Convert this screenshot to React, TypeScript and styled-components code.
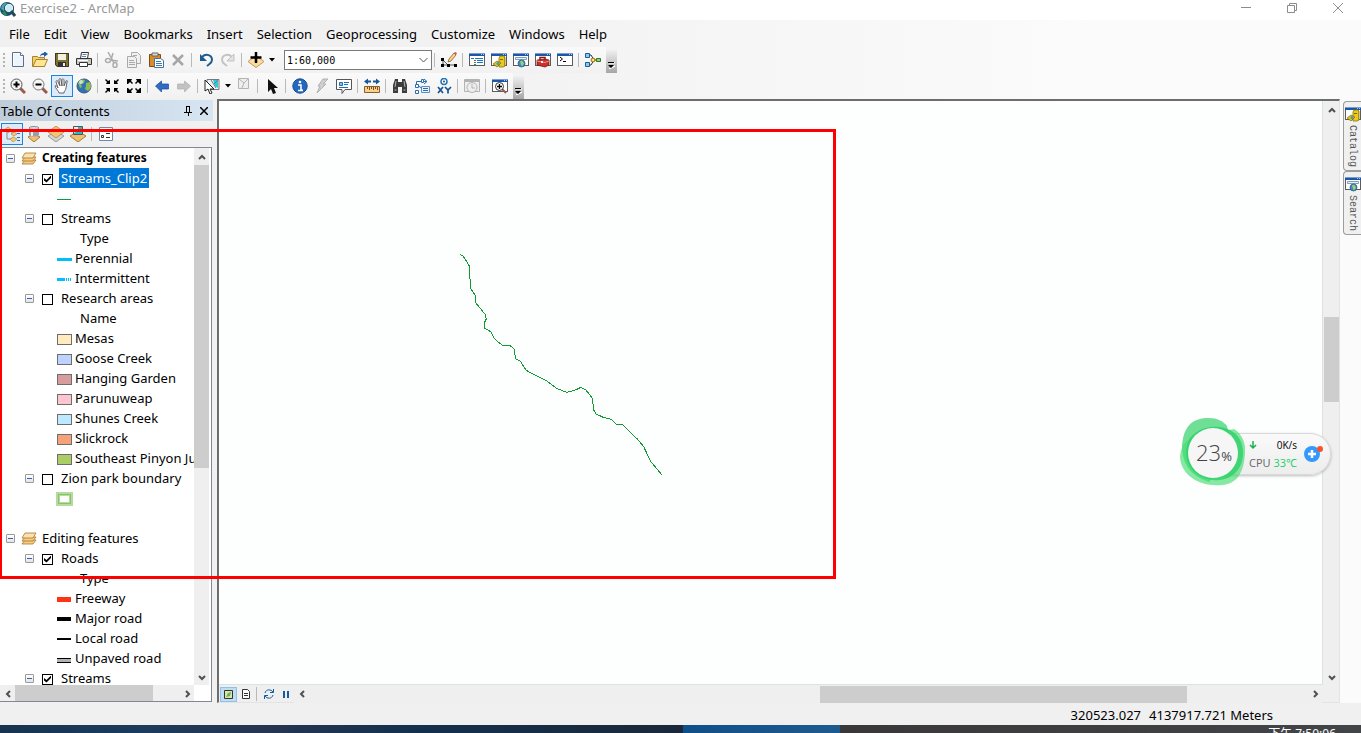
import React from "react";
import styled, { createGlobalStyle, css } from "styled-components";

const Global = createGlobalStyle`
  * { box-sizing: border-box; }
  body {
    margin: 0;
    overflow: hidden;
    background: #f0f0f0;
    color: #000;
    font-family: "Noto Sans", "Noto Sans CJK SC", sans-serif;
    font-size: 13px;
    line-height: 20px;
  }
  button { margin: 0; padding: 0; border: 0; background: none; font: inherit; color: inherit; }
  ul { margin: 0; padding: 0; list-style: none; }
`;

const Window = styled.div`
  position: relative;
  display: flex;
  flex-direction: column;
  height: 100vh;
  overflow: hidden;
  background: linear-gradient(90deg, #f0f0f0, #f1f1f1 30%, #fbfbfb 80%);
`;

/* Title bar */
const TitleBar = styled.header`
  flex: none;
  display: flex;
  align-items: center;
  height: 20px;
  background: #fff;
  color: #999;
`;
const AppTitle = styled.h1`
  flex: 1;
  margin: 0;
  padding: 0 0 4px 4px;
  font-size: 13px;
  line-height: 16px;
  font-weight: 400;
`;
const CaptionButton = styled.button`
  display: grid;
  place-items: center;
  width: 46px;
  height: 16px;
  margin-bottom: 4px;
`;

/* Menu */
const MenuBar = styled.nav`
  flex: none;
  display: flex;
  gap: 14px;
  height: 27px;
  padding: 3px 9px;
`;
const MenuItem = styled.button`
  line-height: 20px;
`;

/* Tool bars */
const ToolBar = styled.div`
  flex: none;
  display: flex;
  height: 26px;
`;
const ToolStrip = styled.div`
  display: flex;
  align-items: center;
  padding: 1px 2px 1px 0;
  background: linear-gradient(#fafafa, #f1f1f1);
`;
const Grip = styled.span`
  width: 2px;
  height: 14px;
  margin: 0 2px 0 3px;
  background: repeating-linear-gradient(#b4b4b4 0 2px, transparent 2px 4px);
`;
const ToolButton = styled.button<{ $active?: boolean; $caret?: boolean }>`
  display: grid;
  grid-auto-flow: column;
  place-items: center;
  width: ${(p) => (p.$caret ? 32 : 22)}px;
  height: 22px;
  ${(p) =>
    p.$active &&
    css`
      background: #dcebf9;
      box-shadow: inset 0 0 0 1px #1b86dd;
    `}
`;
const Divider = styled.span`
  width: 1px;
  height: 14px;
  margin: 0 3px 0 2px;
  background: #b9b9b9;
`;
const Overflow = styled.button`
  display: grid;
  place-items: end center;
  width: 11px;
  height: 23px;
  margin-top: 3px;
  padding-bottom: 4px;
  background: linear-gradient(#f0f0f0, #a6a6a6);
`;
const ScaleBox = styled.span`
  position: relative;
  width: 148px;
  margin: 0 0 0 7px;
`;
const ScaleSelect = styled.select`
  display: block;
  width: 100%;
  height: 20px;
  padding: 0 2px;
  border: 1px solid #7a7a7a;
  border-radius: 0;
  appearance: none;
  background: #fff;
  color: #000;
  font: 10px "DejaVu Sans Mono", monospace;
`;
const ScaleArrow = styled.svg`
  position: absolute;
  right: 4px;
  top: 7px;
  pointer-events: none;
`;

/* Body */
const Body = styled.div`
  flex: 1;
  min-height: 0;
  display: grid;
  grid-template-columns: 217px minmax(0, 1fr) 21px;
`;
const Panel = styled.aside`
  display: flex;
  flex-direction: column;
  min-height: 0;
  margin-right: 4px;
  padding-top: 1px;
`;
const PanelHeader = styled.div`
  flex: none;
  display: flex;
  align-items: center;
  height: 21px;
  padding: 0 1px;
  background: linear-gradient(90deg, #bfcddb, #d7e4f2);
`;
const PanelTitle = styled.h2`
  flex: 1;
  margin: 0;
  font-size: 13px;
  font-weight: 400;
`;
const PanelButton = styled.button`
  display: grid;
  place-items: center;
  width: 16px;
  height: 16px;
`;
const PanelTools = styled.div`
  flex: none;
  display: flex;
  align-items: center;
  height: 26px;
  padding: 1px 1px 2px;
`;
const TreeBox = styled.div`
  flex: 1;
  min-height: 0;
  display: grid;
  grid-template: minmax(0, 1fr) 16px / minmax(0, 1fr) 15px;
  margin: 0 1px 1px 0;
  border: 1px solid #828790;
  border-left: 0;
  padding-right: 2px;
  background: #fff;
`;
const Tree = styled.ul`
  overflow: hidden;
`;
const Row = styled.li<{ $indent: number }>`
  display: flex;
  align-items: center;
  height: 20px;
  padding-left: ${(p) => p.$indent}px;
  white-space: nowrap;
`;
const Expander = styled.button`
  flex: none;
  position: relative;
  width: 9px;
  height: 9px;
  margin-top: 1px;
  border: 1px solid #9a9a9a;
  border-radius: 1px;
  background: linear-gradient(#fff, #e4e4e4);
  &::after {
    content: "";
    position: absolute;
    inset: 3px 1px;
    background: #3b5fb0;
  }
`;
const LayerLabel = styled.label<{ $selected?: boolean }>`
  display: flex;
  align-items: center;
  height: 20px;
  padding: 0 2px;
  background: ${(p) => (p.$selected ? "#0078d7" : "none")};
  color: ${(p) => (p.$selected ? "#fff" : "#000")};
`;
const Check = styled.input`
  flex: none;
  position: relative;
  width: 11px;
  height: 11px;
  margin: 2px 6px 0 8px;
  appearance: none;
  background: #fff;
  border: 1px solid #000;
  &:checked::after {
    content: "";
    position: absolute;
    inset: 1px;
    background: #000;
    clip-path: polygon(0 35%, 36% 64%, 100% 0, 100% 34%, 36% 100%, 0 70%);
  }
`;
const FrameIcon = styled.span`
  display: flex;
  padding-left: 6px;
`;
const FrameName = styled.span<{ $bold?: boolean }>`
  padding-left: 5px;
  font-weight: ${(p) => (p.$bold ? 700 : 400)};
  font-size: ${(p) => (p.$bold ? 12 : 13)}px;
`;
const Symbol = styled.svg`
  flex: none;
  width: 16px;
  height: 16px;
  margin-right: 2px;
`;

/* Scroll bars */
const ScrollV = styled.div`
  display: flex;
  flex-direction: column;
  background: #efefef;
`;
const ScrollH = styled.div`
  flex: 1;
  display: flex;
  background: #efefef;
`;
const ScrollArrow = styled.button`
  flex: none;
  display: grid;
  place-items: center;
  min-width: 15px;
  height: 17px;
`;
const Space = styled.span<{ $grow: number; $thumb?: boolean }>`
  flex: ${(p) => p.$grow} 1 0;
  background: ${(p) => (p.$thumb ? "#cdcdcd" : "transparent")};
`;

/* Map */
const MapFrame = styled.main`
  min-height: 0;
  display: grid;
  grid-template: minmax(0, 1fr) 17px / minmax(0, 1fr) 15px;
  column-gap: 1px;
  border: 2px solid;
  border-color: #6d6d6d #e3e3e3 #e3e3e3 #6d6d6d;
  border-right-width: 1px;
  border-bottom-width: 1px;
  background: #efefef;
`;
const MapCanvas = styled.div`
  position: relative;
  overflow: hidden;
  background: #fdfefe;
  border: solid #dde2e0;
  border-width: 0 1px 1px 0;
`;
const StreamLine = styled.svg`
  position: absolute;
  left: 221px;
  top: 139px;
`;
const MapFooter = styled.div`
  grid-column: 1 / -1;
  display: flex;
  align-items: center;
  padding: 1px 17px 0 1px;
`;
const ViewButton = styled.button<{ $active?: boolean }>`
  display: grid;
  place-items: center;
  width: 17px;
  height: 15px;
  background: ${(p) => (p.$active ? "#bfdcf3" : "none")};
  box-shadow: ${(p) => (p.$active ? "inset 0 0 0 1px #8fc1ea" : "none")};
`;

/* Docked tabs */
const Dock = styled.aside`
  padding: 2px 0 0 3px;
`;
const DockTab = styled.button`
  display: flex;
  flex-direction: column;
  align-items: flex-start;
  gap: 3px;
  width: 100%;
  padding: 4px 0 3px 1px;
  border: 1px solid #9c9c9c;
  border-right: 0;
  border-radius: 4px 0 0 4px;
  background: #f0f0f0;
`;
const DockName = styled.span`
  writing-mode: vertical-rl;
  color: #555;
  font: 10px/14px "Liberation Mono", monospace;
`;

/* Status and task bar */
const StatusBar = styled.footer`
  flex: none;
  display: flex;
  justify-content: flex-end;
  gap: 8px;
  height: 22px;
  padding: 2px 88px 0 0;
  background: #f0f0f0;
  line-height: 20px;
`;
const TaskBar = styled.div`
  flex: none;
  display: grid;
  grid-template-columns: 683fr 157fr 521fr;
  height: 8px;
  overflow: hidden;
`;
const TaskArea = styled.div<{ $fill: string }>`
  background: ${(p) => p.$fill};
`;
const Clock = styled.time`
  display: block;
  margin-top: 2px;
  padding-right: 25px;
  color: #fff;
  text-align: right;
  font-size: 12px;
  line-height: 14px;
`;

/* Marked area laid over the panels */
const Highlight = styled.div`
  position: absolute;
  left: -1px;
  top: 129px;
  width: 837px;
  height: 450px;
  border: 3px solid #f00;
  pointer-events: none;
`;

/* Floating system monitor */
const Monitor = styled.section`
  position: absolute;
  right: 30px;
  top: 416px;
  display: flex;
  align-items: center;
  width: 151px;
  height: 72px;
`;
const Pill = styled.div`
  flex: 1;
  display: flex;
  align-items: center;
  gap: 6px;
  height: 42px;
  margin: 4px 0 0 30px;
  padding: 0 4px 0 38px;
  border: 1px solid #d9d9d9;
  border-radius: 21px;
  background: linear-gradient(#fafafa, #ededed);
  box-shadow: 0 1px 3px #0004;
`;
const Readings = styled.div`
  flex: none;
  width: 48px;
  line-height: 18px;
`;
const Reading = styled.div<{ $color?: string }>`
  display: flex;
  justify-content: space-between;
  align-items: center;
  color: ${(p) => p.$color || "#000"};
  font-family: "Open Sans", sans-serif;
  font-size: ${(p) => (p.$color ? 11 : 10)}px;
  white-space: nowrap;
  & em { color: #1fd068; font-style: normal; }
`;
const Ring = styled.svg`
  position: absolute;
  left: 0;
  top: 0;
`;
const Percent = styled.div`
  position: absolute;
  left: 16px;
  top: 22px;
  color: #444;
  font: 300 22px/28px "Open Sans", sans-serif;
  & small { font-size: 13px; font-weight: 400; }
`;
const BoostButton = styled.button`
  flex: none;
  width: 20px;
  height: 22px;
  margin-bottom: 4px;
`;

const WindowShape = () => (
  <>
    <rect x=".5" y="1.5" width="15" height="12" fill="#fff" stroke="#5c5c5c" />
    <path d="M0 1h16v3H0z" fill="#1c56a8" />
    <path d="M0 1h16v1H0z" fill="#7d9cc8" />
    <path d="M12 2h1v1h-1zM14 2h1v1h-1z" fill="#a9c8f0" />
  </>
);

const icons: Record<string, React.ReactNode> = {
  app: (
    <>
      <circle cx="7" cy="7" r="7" fill="#14506e" />
      <path d="M2 3c3-3 8-3 10 0l-3 3-3-1-2 4-3-2z" fill="#4aa4b4" />
      <path d="M2 10l3-1 2 4-2 1z" fill="#2b8a55" />
      <circle cx="9" cy="6" r="4" fill="#c8edf5" stroke="#eaf8fb" />
      <circle cx="9" cy="6" r="4.6" fill="none" stroke="#2c5063" />
      <path d="M11 9l4 5" stroke="#24495d" strokeWidth="3" />
    </>
  ),
  new: (
    <>
      <path d="M2.500.5h8l3 3v11h-11z" fill="#fff" stroke="#57718f" />
      <path d="M4 2h6v3h3v9H4z" fill="#eef4fb" />
      <path d="M10.500.5v3h3" fill="#fff" stroke="#57718f" />
    </>
  ),
  open: (
    <>
      <path d="M.5 14.500v-10h5l1 1h6v9z" fill="#f3cf6c" stroke="#a7832d" />
      <path d="M1 14.500l3-7h11.500l-3 7z" fill="#ffe594" stroke="#a7832d" />
      <path d="M8 5c0-3 2-4 4-4V-1l4 3-4 3V3c-2 0-3 0-4 2z" fill="#1d5ea8" />
    </>
  ),
  save: (
    <>
      <path d="M1 1h14v14H3l-2-2z" fill="#7d7232" />
      <path d="M1.500 1.500h13v13h-11l-2-2z" fill="none" stroke="#3d3920" />
      <path d="M4 2h8v6H4z" fill="#f3f1de" />
      <path d="M4 10h8v5H4z" fill="#333" />
      <path d="M9 11h2v3H9z" fill="#eee" />
    </>
  ),
  print: (
    <>
      <path d="M4.500 6.500l1-6h7l-1 6z" fill="#fff" stroke="#333" />
      <path d="M6.500 2.500h4M6 4.500h4" stroke="#5d86b8" />
      <path d="M.5 6.500h15v6H.5z" fill="#c9c9c9" stroke="#333" />
      <path d="M2 8.500h12" stroke="#fff" />
      <path d="M3.500 10.500h8v4h-8z" fill="#fff" stroke="#333" />
      <path d="M12 8h2v1h-2z" fill="#e0b52c" />
    </>
  ),
  cut: (
    <g fill="none" stroke="#acacac" strokeWidth="1.500">
      <path d="M4 0l6 11M9 1L7 8" />
      <ellipse cx="4" cy="8.500" rx="2.500" ry="2" />
      <ellipse cx="11" cy="13" rx="2" ry="2.500" />
      <path d="M6 8l8 1" />
    </g>
  ),
  copy: (
    <g fill="#f0f0f0" stroke="#a9a9a9">
      <path d="M5.500.5h6l3 3v8h-9z" />
      <path d="M1.500 4.500h7l2 2v9h-9z" />
      <path d="M3 8.500h5M3 10.500h6M3 12.500h6M7 3.500h4" />
    </g>
  ),
  paste: (
    <>
      <path d="M1.500 2.500h11v12h-11z" fill="#d98a2d" stroke="#804910" />
      <path d="M4 1h6v3H4z" fill="#d7d7d7" stroke="#666" />
      <path d="M6.500 6.500h6l3 2v7h-9z" fill="#fff" stroke="#47719d" />
      <path d="M8 9.500h5M8 11.500h6M8 13.500h6" stroke="#3d78b7" />
    </>
  ),
  remove: <path d="M3 3l10 10M13 3L3 13" stroke="#a6a6a6" strokeWidth="2.500" />,
  undo: (
    <>
      <path d="M4 5c4-4 10-2 10 3 0 3-3 4-5 6" fill="none" stroke="#1d5c91" strokeWidth="2" />
      <path d="M2 2v7h7z" fill="#1d5c91" />
    </>
  ),
  redo: (
    <>
      <path d="M12 5C8 1 2 3 2 8c0 3 3 4 5 6" fill="none" stroke="#c3c3c3" strokeWidth="2" />
      <path d="M14 2v7H7z" fill="#e2e2e2" stroke="#c3c3c3" />
    </>
  ),
  addData: (
    <>
      <path d="M0 9.500l8-6 8 6-8 6z" fill="#f8dca0" stroke="#c59a50" />
      <path d="M8 0v11M2.500 5.500h11" stroke="#000" strokeWidth="2.500" />
    </>
  ),
  editor: (
    <>
      <path d="M2 8v5h12M2 8l5 5" fill="none" stroke="#555" />
      <path d="M0 6h3v3H0zM0 12h3v3H0zM6 12h3v3H6zM13 12h3v3h-3z" fill="#000" />
      <path d="M7 10l1-3 5-6 2 2-5 6z" fill="#f4d58b" stroke="#8a5b28" strokeWidth=".8" />
      <path d="M13 1l2 2 1-2-2-1z" fill="#d8544b" />
    </>
  ),
  toc: (
    <>
      <WindowShape />
      <path d="M6 6.500h8M8 8.500h6M8 10.500h6" stroke="#1779c8" />
      <path d="M2 6.500h3" stroke="#1779c8" />
      <path d="M5 8.500h2" stroke="#d72f2f" />
      <path d="M5 10.500h2M5 12.500h2" stroke="#1d9c42" />
    </>
  ),
  catalog: (
    <>
      <WindowShape />
      <path d="M8 6l1-2h4l1 1v9l-2 1H8z" fill="#e9ca1e" stroke="#8b7100" strokeWidth=".8" />
      <path d="M13 5v10l1-1V5z" fill="#af8e08" />
      <path d="M9 7h3v1H9z" fill="#7b6500" />
      <path d="M2 12l4-3 4 2-4 4z" fill="#e2c01c" stroke="#6d5b08" strokeWidth=".6" />
      <circle cx="7" cy="11.500" r="1.500" fill="#419db3" />
    </>
  ),
  search: (
    <>
      <WindowShape />
      <path d="M2.500 5.500h11v2h-11z" fill="#e9f1fb" stroke="#7e9cc4" />
      <circle cx="8.500" cy="11.500" r="3.500" fill="#3b8bd0" stroke="#275170" strokeWidth=".7" />
      <path d="M7 9.500l2-1 2 3-2 3-1-2z" fill="#9bd36c" />
    </>
  ),
  toolbox: (
    <>
      <WindowShape />
      <path d="M5 8V5.500h5V8" fill="none" stroke="#8b1717" strokeWidth="1.500" />
      <path d="M2 8l8-1 4 1v5l-4 2-8-2z" fill="#c8312c" stroke="#7c1715" strokeWidth=".8" />
      <path d="M2 9l8 1.500 4-1.500" fill="none" stroke="#f09488" />
      <path d="M6 9h2v2H6z" fill="#eee" />
    </>
  ),
  python: (
    <>
      <WindowShape />
      <path d="M3 5l2.500 2L3 9M6 9.500h3" fill="none" stroke="#000" />
    </>
  ),
  model: (
    <>
      <path d="M3 3h3l3 5-3 5H3M8 8h5" fill="none" stroke="#333" />
      <path d="M.5 1.500h4v4h-4zM.5 10.500h4v4h-4z" fill="#8cc8f0" stroke="#175d9c" />
      <circle cx="8" cy="8" r="2" fill="#ffe25a" stroke="#91701b" />
      <path d="M11.500 6.500h4v3h-4z" fill="#9bd070" stroke="#34752b" />
    </>
  ),
  zoomIn: (
    <>
      <path d="M10 10l5 5" stroke="#9b5a4c" strokeWidth="3" />
      <circle cx="6.500" cy="6.500" r="5.500" fill="#f5f5f5" stroke="#555" />
      <path d="M3.500 6.500h6M6.500 3.500v6" stroke="#000" strokeWidth="2" />
    </>
  ),
  zoomOut: (
    <>
      <path d="M10 10l5 5" stroke="#9b5a4c" strokeWidth="3" />
      <circle cx="6.500" cy="6.500" r="5.500" fill="#f5f5f5" stroke="#777" />
      <path d="M3.500 6.500h6" stroke="#000" strokeWidth="2" />
    </>
  ),
  pan: (
    <path
      d="M5 15c0-2-4-5-4-7 1-1 2 0 3 2L2 4c0-2 2-2 2 0l2 4-1-6c0-2 2-2 2 0l1 6V2c0-2 2-1 2 0v6l2-5c1-1 2 0 1 1l-1 6c0 2-2 3-2 5z"
      fill="#fff"
      stroke="#555"
      strokeWidth=".9"
    />
  ),
  globe: (
    <>
      <circle cx="8" cy="8" r="7" fill="#2f72b8" stroke="#355774" />
      <path d="M2 5c2-4 5-4 7-3L8 5 5 6l1 3-2 1zM10 5l4-1c2 4 1 7-2 9l-3-2 1-3z" fill="#8fb957" />
      <circle cx="5" cy="4" r="2" fill="#e4f6ff" opacity=".7" />
    </>
  ),
  fixedIn: (
    <path
      d="M2 1l2 2 2-1v4H2l1-2-2-2zM14 1l-2 2-2-1v4h4l-1-2 2-2zM2 15l2-2 2 1v-4H2l1 2-2 2zM14 15l-2-2-2 1v-4h4l-1 2 2 2z"
      fill="#000"
    />
  ),
  fixedOut: (
    <path
      d="M1 1h5L5 3l2 2-1 1-2-2-2 2H1zM15 1h-5l1 2-2 2 1 1 2-2 2 2h1zM1 15h5l-1-2 2-2-1-1-2 2-2-2H1zM15 15h-5l1-2-2-2 1-1 2 2 2-2h1z"
      fill="#000"
    />
  ),
  back: <path d="M1.500 8l6-5v3h7v5h-7v3z" fill="#2f6cc4" stroke="#184a92" strokeWidth=".7" />,
  forward: <path d="M14.500 8l-6-5v3h-7v5h7v3z" fill="#c2c2c2" stroke="#b0b0b0" strokeWidth=".7" />,
  selectFeatures: (
    <>
      <path d="M3 1.500h12v10H3z" fill="#e8f4f5" stroke="#777" />
      <path d="M9 2h5v8l-3-2z" fill="#28cddd" />
      <path d="M7 2l5 8M14 2l-4 4" stroke="#777" />
      <path d="M1 2v11l3-2 2 5 2-1-2-4h4z" fill="#fff" stroke="#222" />
    </>
  ),
  clearSelection: (
    <g fill="#eee" stroke="#b4b4b4">
      <path d="M2.500.5h10v10h-10z" />
      <path d="M3 1l5 4 4-4M8 5l-2 5" />
    </g>
  ),
  pointer: <path d="M4 1v13l3-3 2 5 3-1-2-5h4z" fill="#111" />,
  identify: (
    <>
      <circle cx="8" cy="8" r="7.200" fill="#2468bd" stroke="#184890" />
      <circle cx="8" cy="4" r="1.300" fill="#fff" />
      <path d="M6 7h3v5h1.500M6 12.500h5" fill="none" stroke="#fff" strokeWidth="1.500" />
    </>
  ),
  hyperlink: <path d="M9 1h5L9 6h3L3 15l3-7H4z" fill="#d0d0d0" stroke="#b0b0b0" />,
  popup: (
    <>
      <path d="M.5 1.500h15v10H9l-3 4v-4H.5z" fill="#fff" stroke="#555" />
      <path d="M3.500 4.500h3v3h-3z" fill="#8dbfe8" stroke="#206fb5" />
      <path d="M8 4.500h5M8 6.500h4M3 9.500h9" stroke="#206fb5" />
    </>
  ),
  measure: (
    <>
      <path d="M0 3.500l4-3v2h3v2H4v2zM16 3.500l-4-3v2H9v2h3v2z" fill="#16599a" />
      <path d="M.5 8.500h15v6H.5z" fill="#f4d18c" stroke="#8d5c27" />
      <path d="M3.500 9v2M5.500 9v3M7.500 9v2M9.500 9v3M11.500 9v2M13.500 9v3" stroke="#80501e" />
    </>
  ),
  find: (
    <>
      <path d="M3 1h3v3h4V1h3l2 6v8h-5V9H6v6H1V7z" fill="#3c3c3c" />
      <path d="M4 3L3 9M12 3l1 6M2.500 12h2M11.500 12h2" stroke="#b5b5b5" />
    </>
  ),
  route: (
    <>
      <path d="M2.500 9V3.500h10M10 1l3 2.500L10 6" fill="none" stroke="#2b6caa" />
      <path d="M1.500 6.500h3v3h-3zM1.500 12.500h3v3h-3zM7.500 1.500h2v3h-2z" fill="#fff" stroke="#2b6caa" />
      <path d="M7.500 8.500h8v6h-8z" fill="#e6f1fb" stroke="#5e8dba" />
      <path d="M4.500 8l3 2M9 10.500h5M9 12.500h5" stroke="#2b6caa" />
    </>
  ),
  goToXY: (
    <>
      <circle cx="8" cy="3.500" r="3" fill="#fff" stroke="#2375b6" strokeWidth="1.500" />
      <circle cx="8" cy="3.500" r="1" fill="#154e84" />
      <path d="M2 9l5 6M7 9l-5 6M9 9l3 3 3-3M12 12v3.500" fill="none" stroke="#17548c" strokeWidth="1.700" />
    </>
  ),
  time: (
    <g fill="#eee" stroke="#b3b3b3">
      <path d="M.5 1.500h15v12H.5z" />
      <path d="M1 3h14" strokeWidth="2" />
      <circle cx="8" cy="9.500" r="5" />
      <path d="M8 6v4h3" fill="none" />
    </g>
  ),
  viewer: (
    <>
      <WindowShape />
      <path d="M10 11l4 4" stroke="#9b5a4c" strokeWidth="2" />
      <circle cx="7.500" cy="8.500" r="4" fill="#fff" stroke="#333" />
      <path d="M5 8.500h5M7.500 6v5" stroke="#000" strokeWidth="1.300" />
    </>
  ),
  byDrawing: (
    <>
      <path d="M3 5v8h6M6 5l4 3" fill="none" stroke="#888" />
      <path d="M0 4l4-3 4 3-4 3zM7 8l3-2 3 2-3 2zM6 13l3-2 4 2-4 3z" fill="#f2c87c" stroke="#b8893e" strokeWidth=".7" />
      <path d="M13 7.500h3M13 11.500h3M13 14.500h3" stroke="#356cb0" />
    </>
  ),
  bySource: (
    <>
      <path d="M2 11l6-3 6 3-6 5z" fill="#efc06d" stroke="#a57a34" />
      <path d="M3 2v7c2 2 8 2 10 0V2z" fill="#99a0ad" />
      <path d="M6 2v8" stroke="#e9edf3" strokeWidth="2" />
      <ellipse cx="8" cy="2" rx="5" ry="1.500" fill="#d9dfe8" stroke="#858b99" />
    </>
  ),
  byVisibility: (
    <>
      <path d="M0 10l8-5 8 5-8 6z" fill="#d5d5d5" stroke="#777" strokeWidth=".7" />
      <path d="M0 6l8-6 8 6-8 6z" fill="#f1c678" stroke="#a57a34" strokeWidth=".7" />
    </>
  ),
  bySelection: (
    <>
      <path d="M0 10l8-5 8 5-8 6z" fill="#efc06d" stroke="#a57a34" />
      <path d="M3.500.5h9v8h-9z" fill="#21bad0" stroke="#555" />
      <path d="M4 1h4v4l-4 2z" fill="#e8f0f1" />
    </>
  ),
  options: (
    <>
      <path d="M1.500 1.500h13v13h-13z" fill="#fff" stroke="#7089a5" />
      <path d="M3.500 9.500h2v2h-2z" fill="#fff" stroke="#333" />
      <path d="M8 7.500h4M8 11.500h4" stroke="#333" />
    </>
  ),
  frame: (
    <g fill="#f6cb83" stroke="#a7772e" strokeWidth=".8">
      <path d="M1 14l3-4h11l-3 4z" />
      <path d="M1 11l3-4h11l-3 4z" />
      <path d="M1 8l3-5h11l-3 5z" fill="#fbe1ae" />
    </g>
  ),
};

const Icon = ({ name }: { name: string }) => (
  <svg width="16" height="16" viewBox="0 0 16 16" aria-hidden="true">
    {icons[name]}
  </svg>
);

const arrowPaths = {
  up: "M1 6l3-3 3 3",
  down: "M1 3l3 3 3-3",
  left: "M6 1L3 4l3 3",
  right: "M3 1l3 3-3 3",
};
const Arrow = ({ to }: { to: keyof typeof arrowPaths }) => (
  <ScrollArrow aria-label={`Scroll ${to}`}>
    <svg width="8" height="8">
      <path d={arrowPaths[to]} fill="none" stroke="#505050" strokeWidth="2" />
    </svg>
  </ScrollArrow>
);

type Tool = { icon: string; label: string; active?: boolean; caret?: boolean };
const t = (icon: string, label: string, extra: Partial<Tool> = {}): Tool => ({ icon, label, ...extra });

const standardLeft: Tool[][] = [
  [t("new", "New"), t("open", "Open"), t("save", "Save"), t("print", "Print")],
  [t("cut", "Cut"), t("copy", "Copy"), t("paste", "Paste"), t("remove", "Delete")],
  [t("undo", "Undo"), t("redo", "Redo")],
  [t("addData", "Add Data", { caret: true })],
];
const standardRight: Tool[][] = [
  [t("editor", "Editor Toolbar")],
  [
    t("toc", "Table Of Contents"),
    t("catalog", "Catalog"),
    t("search", "Search"),
    t("toolbox", "ArcToolbox"),
    t("python", "Python"),
  ],
  [t("model", "ModelBuilder")],
];
const navigation: Tool[][] = [
  [t("zoomIn", "Zoom In"), t("zoomOut", "Zoom Out"), t("pan", "Pan", { active: true }), t("globe", "Full Extent")],
  [t("fixedIn", "Fixed Zoom In"), t("fixedOut", "Fixed Zoom Out")],
  [t("back", "Back"), t("forward", "Forward")],
  [t("selectFeatures", "Select Features", { caret: true }), t("clearSelection", "Clear Selection")],
  [t("pointer", "Select Elements")],
  [t("identify", "Identify"), t("hyperlink", "Hyperlink"), t("popup", "HTML Popup")],
  [t("measure", "Measure")],
  [t("find", "Find"), t("route", "Find Route"), t("goToXY", "Go To XY")],
  [t("time", "Time Slider")],
  [t("viewer", "Create Viewer Window")],
];
const listing: Tool[][] = [
  [
    t("byDrawing", "List By Drawing Order", { active: true }),
    t("bySource", "List By Source"),
    t("byVisibility", "List By Visibility"),
    t("bySelection", "List By Selection"),
  ],
  [t("options", "Options")],
];
const menus = [
  "File",
  "Edit",
  "View",
  "Bookmarks",
  "Insert",
  "Selection",
  "Geoprocessing",
  "Customize",
  "Windows",
  "Help",
];

const Tools = ({ groups }: { groups: Tool[][] }) => (
  <>
    {groups.map((group, i) => (
      <React.Fragment key={i}>
        {i > 0 && <Divider />}
        {group.map((tool) => (
          <ToolButton key={tool.label} aria-label={tool.label} $active={tool.active} $caret={tool.caret}>
            <Icon name={tool.icon} />
            {tool.caret && (
              <svg width="6" height="4">
                <path d="M0 0h6L3 3.500z" />
              </svg>
            )}
          </ToolButton>
        ))}
      </React.Fragment>
    ))}
  </>
);

const More = () => (
  <Overflow aria-label="Toolbar options">
    <svg width="7" height="7">
      <path d="M1 1h6M1 7l6-3z" stroke="#fff" />
      <path d="M0 0h6v1H0zM0 3h6L3 6z" />
    </svg>
  </Overflow>
);

type Node =
  | { kind: "frame"; name: string; bold?: boolean }
  | { kind: "layer"; name: string; checked?: boolean; selected?: boolean }
  | { kind: "heading"; name: string }
  | { kind: "symbol"; name: string; draw: React.ReactNode }
  | { kind: "blank" };

const patch = (color: string) => <rect x=".5" y="4.500" width="14" height="10" fill={color} stroke="#6e6e6e" />;

const nodes: Node[] = [
  { kind: "frame", name: "Creating features", bold: true },
  { kind: "layer", name: "Streams_Clip2", checked: true, selected: true },
  { kind: "symbol", name: "", draw: <path d="M0 9.500h14" stroke="#149a33" /> },
  { kind: "layer", name: "Streams" },
  { kind: "heading", name: "Type" },
  { kind: "symbol", name: "Perennial", draw: <path d="M0 9.500h15" stroke="#00bfff" strokeWidth="3" /> },
  {
    kind: "symbol",
    name: "Intermittent",
    draw: <path d="M0 9.500h8m1 0h1m1 0h1m1 0h1" stroke="#00bfff" strokeWidth="3" />,
  },
  { kind: "layer", name: "Research areas" },
  { kind: "heading", name: "Name" },
  { kind: "symbol", name: "Mesas", draw: patch("#ffebbe") },
  { kind: "symbol", name: "Goose Creek", draw: patch("#bed2ff") },
  { kind: "symbol", name: "Hanging Garden", draw: patch("#d69d9c") },
  { kind: "symbol", name: "Parunuweap", draw: patch("#fcc5cf") },
  { kind: "symbol", name: "Shunes Creek", draw: patch("#bee8ff") },
  { kind: "symbol", name: "Slickrock", draw: patch("#f5a27a") },
  { kind: "symbol", name: "Southeast Pinyon Juniper", draw: patch("#aacd65") },
  { kind: "layer", name: "Zion park boundary" },
  {
    kind: "symbol",
    name: "",
    draw: (
      <>
        <rect x="1" y="4" width="13" height="10" fill="#fff" stroke="#b5dba0" strokeWidth="4" />
        <rect x="1.500" y="4.500" width="12" height="9" fill="none" stroke="#86c565" />
      </>
    ),
  },
  { kind: "blank" },
  { kind: "frame", name: "Editing features" },
  { kind: "layer", name: "Roads", checked: true },
  { kind: "heading", name: "Type" },
  { kind: "symbol", name: "Freeway", draw: <path d="M0 9.500h14" stroke="#ff3314" strokeWidth="5" /> },
  { kind: "symbol", name: "Major road", draw: <path d="M0 9h14" stroke="#000" strokeWidth="4" /> },
  { kind: "symbol", name: "Local road", draw: <path d="M0 9h14" stroke="#000" strokeWidth="2" /> },
  {
    kind: "symbol",
    name: "Unpaved road",
    draw: (
      <>
        <path d="M0 10.500h14" stroke="#b2b2b2" strokeWidth="3" />
        <path d="M0 8.500h14M0 12.500h14" stroke="#000" />
      </>
    ),
  },
  { kind: "layer", name: "Streams", checked: true },
];

const TreeRow = ({ node, id }: { node: Node; id: string }) => {
  switch (node.kind) {
    case "frame":
      return (
        <Row $indent={6}>
          <Expander aria-label={`Collapse ${node.name}`} />
          <FrameIcon>
            <Icon name="frame" />
          </FrameIcon>
          <FrameName $bold={node.bold}>{node.name}</FrameName>
        </Row>
      );
    case "layer":
      return (
        <Row $indent={25}>
          <Expander aria-label={`Collapse ${node.name}`} />
          <Check type="checkbox" id={id} defaultChecked={node.checked} />
          <LayerLabel htmlFor={id} $selected={node.selected}>
            {node.name}
          </LayerLabel>
        </Row>
      );
    case "heading":
      return <Row $indent={80}>{node.name}</Row>;
    case "symbol":
      return (
        <Row $indent={57}>
          <Symbol viewBox="0 0 16 16" overflow="visible">
            {node.draw}
          </Symbol>
          {node.name}
        </Row>
      );
    default:
      return <Row $indent={0} />;
  }
};

export default function App() {
  return (
    <>
      <Global />
      <Window>
        <TitleBar>
          <Icon name="app" />
          <AppTitle>Exercise2 - ArcMap</AppTitle>
          <CaptionButton aria-label="Minimize">
            <svg width="12" height="12">
              <path d="M1 5.500h10" stroke="#8c8c8c" />
            </svg>
          </CaptionButton>
          <CaptionButton aria-label="Restore">
            <svg width="12" height="12" fill="none" stroke="#8c8c8c">
              <path d="M1.500 3.500h7v7h-7zM3.500 3V1.500h7v7H9" />
            </svg>
          </CaptionButton>
          <CaptionButton aria-label="Close">
            <svg width="12" height="12">
              <path d="M1 1l10 10M11 1L1 11" stroke="#8c8c8c" />
            </svg>
          </CaptionButton>
        </TitleBar>

        <MenuBar>
          {menus.map((name) => (
            <MenuItem key={name}>{name}</MenuItem>
          ))}
        </MenuBar>

        <ToolBar role="toolbar" aria-label="Standard">
          <ToolStrip>
            <Grip />
            <Tools groups={standardLeft} />
            <ScaleBox>
              <ScaleSelect aria-label="Map scale">
                <option>1:60,000</option>
              </ScaleSelect>
              <ScaleArrow width="9" height="6">
                <path d="M.5 1l4 4 4-4" fill="none" stroke="#555" />
              </ScaleArrow>
            </ScaleBox>
            <Divider />
            <Tools groups={standardRight} />
          </ToolStrip>
          <More />
        </ToolBar>
        <ToolBar role="toolbar" aria-label="Tools">
          <ToolStrip>
            <Grip />
            <Tools groups={navigation} />
          </ToolStrip>
          <More />
        </ToolBar>

        <Body>
          <Panel>
            <PanelHeader>
              <PanelTitle>Table Of Contents</PanelTitle>
              <PanelButton aria-label="Auto hide">
                <svg width="9" height="10">
                  <path d="M2.500 0v6M2 .5h4M5.500 0v6M0 6.500h8M4.500 7v3" fill="none" stroke="#000" />
                </svg>
              </PanelButton>
              <PanelButton aria-label="Close panel">
                <svg width="8" height="8">
                  <path d="M0 0l8 8M8 0L0 8" stroke="#000" strokeWidth="1.500" />
                </svg>
              </PanelButton>
            </PanelHeader>
            <PanelTools>
              <Tools groups={listing} />
            </PanelTools>
            <TreeBox>
              <Tree>
                {nodes.map((node, i) => (
                  <TreeRow key={i} node={node} id={`layer-${i}`} />
                ))}
              </Tree>
              <ScrollV>
                <Arrow to="up" />
                <Space $grow={303} $thumb />
                <Space $grow={200} />
                <Arrow to="down" />
              </ScrollV>
              <ScrollH>
                <Arrow to="left" />
                <Space $grow={136} $thumb />
                <Space $grow={26} />
                <Arrow to="right" />
              </ScrollH>
            </TreeBox>
          </Panel>

          <MapFrame>
            <MapCanvas>
              <StreamLine width="240" height="250" viewBox="0 0 720 750" shapeRendering="crispEdges">
                <polyline
                  points="60,43 70,49 87,76 92,145 106,166 107,188 136,224 139,237 133,248 133,264 152,275 163,296 187,316 209,316 222,326 227,356 241,363 257,389 270,398 318,421 350,445 380,457 404,451 423,442 438,450 457,475 461,510 468,522 490,532 514,538 529,553 547,553 592,597 611,620 632,664 665,704"
                  fill="none"
                  stroke="#149a33"
                  strokeWidth="3"
                />
              </StreamLine>
            </MapCanvas>
            <ScrollV>
              <Arrow to="up" />
              <Space $grow={199} />
              <Space $grow={86} $thumb />
              <Space $grow={266} />
              <Arrow to="down" />
            </ScrollV>
            <MapFooter>
              <ViewButton $active aria-label="Data View">
                <svg width="9" height="9">
                  <path d="M.5.5h8v8h-8z" fill="#d7e6a0" stroke="#333" />
                  <path d="M2 7l2-4 3-1-1 4z" fill="#6eae62" />
                </svg>
              </ViewButton>
              <ViewButton aria-label="Layout View">
                <svg width="8" height="10">
                  <path d="M.5.5h5l2 2v7h-7z" fill="#fff" stroke="#333" />
                  <path d="M2 4.500h4M2 6.500h4" stroke="#333" />
                </svg>
              </ViewButton>
              <Divider />
              <ViewButton aria-label="Refresh">
                <svg width="10" height="10" fill="none" stroke="#155a9c">
                  <path d="M1 4c1-4 6-4 8-1M9 6c-1 4-6 4-8 1M9.500 0v3.500H6M.5 10V6.500H4" />
                </svg>
              </ViewButton>
              <ViewButton aria-label="Pause Drawing">
                <svg width="6" height="7">
                  <path d="M0 0h2v7H0zM4 0h2v7H4z" fill="#155a9c" />
                </svg>
              </ViewButton>
              <ScrollH>
                <Arrow to="left" />
                <Space $grow={509} />
                <Space $grow={366} $thumb />
                <Space $grow={120} />
                <Arrow to="right" />
              </ScrollH>
            </MapFooter>
          </MapFrame>

          <Dock>
            <DockTab>
              <Icon name="catalog" />
              <DockName>Catalog</DockName>
            </DockTab>
            <DockTab>
              <Icon name="search" />
              <DockName>Search</DockName>
            </DockTab>
          </Dock>
        </Body>

        <StatusBar>
          <span>320523.027</span>
          <span>4137917.721 Meters</span>
        </StatusBar>
        <TaskBar>
          <TaskArea $fill="linear-gradient(90deg, #17334f, #1c3b5c 20%, #263650 38%, #14304d 60%, #1a2839)" />
          <TaskArea $fill="linear-gradient(90deg, #0f4f89, #1d5a8f)" />
          <TaskArea $fill="linear-gradient(90deg, #3a3739, #424548)">
            <Clock>下午 7:50:06</Clock>
          </TaskArea>
        </TaskBar>

        <Highlight />

        <Monitor aria-label="System monitor">
          <Pill>
            <Readings>
              <Reading>
                <svg width="8" height="9">
                  <path d="M4 0v7M1 4l3 3 3-3" fill="none" stroke="#1faf4f" strokeWidth="1.500" />
                </svg>
                0K/s
              </Reading>
              <Reading $color="#666">
                CPU <em>33℃</em>
              </Reading>
            </Readings>
            <BoostButton aria-label="Boost">
              <svg width="20" height="22">
                <circle cx="9" cy="13" r="8" fill="#3399fb" />
                <path d="M9 9v8M5 13h8" stroke="#fff" strokeWidth="2.500" />
                <circle cx="17" cy="8" r="3" fill="#f9532e" />
              </svg>
            </BoostButton>
          </Pill>
          <Ring width="66" height="72">
            <path d="M2 29C4 9 13 2 29 2c8 0 14 3 18 8l6 28-24 28C12 60 2 50 2 29z" fill="#55d983" opacity=".85" />
            <path d="M0 42c0-9 4-16 12-21l42-8c8 5 12 14 11 24-1 18-7 31-23 32C20 71 2 60 0 42z" fill="#45dc72" opacity=".65" />
            <path d="M10 22C24 4 62 7 63 35c1 20-14 31-30 29C8 61 1 39 10 22z" fill="#29cf65" opacity=".75" />
            <circle cx="33" cy="37" r="25" fill="#f6f6f6" />
          </Ring>
          <Percent>
            23<small>%</small>
          </Percent>
        </Monitor>
      </Window>
    </>
  );
}
